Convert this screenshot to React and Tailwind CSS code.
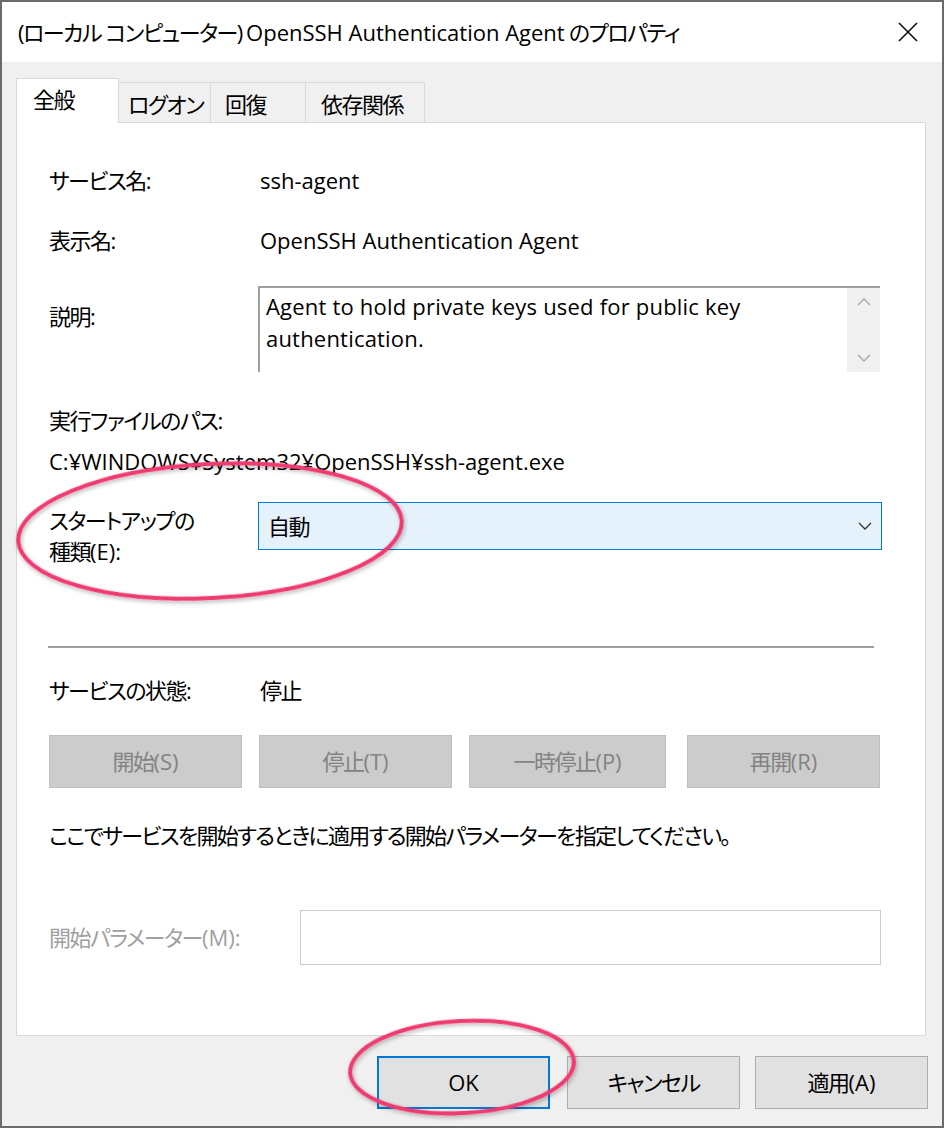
import React from 'react';

const font = { fontFamily: '"Open Sans", "Noto Sans CJK JP", sans-serif' };

const Chevron = ({ up, className }) => (
  <svg width="14" height="8" viewBox="0 0 14 8" className={className}>
    <path d={up ? 'M1 7 L7 1 L13 7' : 'M1 1 L7 7 L13 1'} fill="none" stroke="currentColor" strokeWidth="1.3" />
  </svg>
);

const Tab = ({ label, active, w, pl }) =>
  active ? (
    <div className={`h-[45px] ${w} bg-white border border-b-0 border-[#d9d9d9] pl-[16px] pt-[5px] leading-[30px] whitespace-nowrap relative z-10 -mb-px`}>
      {label}
    </div>
  ) : (
    <div className={`h-[40px] ${w} ${pl} bg-[#f0f0f0] border-t border-r border-[#d9d9d9] pt-[7px] leading-[28px] whitespace-nowrap`}>
      {label}
    </div>
  );

const DisabledButton = ({ label, keyHint, w }) => (
  <div className={`h-[53px] ${w} bg-[#cccccc] border border-[#bfbfbf] flex items-center justify-center text-[#838383]`}>
    {label}
    <span className="tracking-normal">{keyHint}</span>
  </div>
);

const Ellipse = ({ className, rx, ry, rotate }) => (
  <svg className={`absolute pointer-events-none ${className}`} viewBox={`0 0 ${rx * 2 + 20} ${ry * 2 + 20}`}>
    <defs>
      <filter id={`sh${rx}`} x="-10%" y="-10%" width="120%" height="120%">
        <feDropShadow dx="1" dy="2" stdDeviation="2" floodColor="#000" floodOpacity="0.3" />
      </filter>
    </defs>
    <ellipse
      cx={rx + 10}
      cy={ry + 10}
      rx={rx}
      ry={ry}
      fill="none"
      stroke="#ef3a70"
      strokeWidth="4"
      filter={`url(#sh${rx})`}
      transform={`rotate(${rotate} ${rx + 10} ${ry + 10})`}
    />
  </svg>
);

export default function App() {
  return (
    <div
      className="w-[944px] h-[1128px] border-2 border-[#6b6b6b] bg-[#f0f0f0] flex flex-col relative text-black text-[22px] tracking-[-1.5px] [font-feature-settings:'palt']"
      style={font}
    >
      {/* title bar */}
      <div className="h-[60px] bg-white flex items-center justify-between pl-[16px] pr-[24px] shrink-0">
        <span className="whitespace-nowrap">
          (ローカル コンピューター) <span className="tracking-normal">OpenSSH Authentication Agent</span> のプロパティ
        </span>
        <svg width="20" height="20" viewBox="0 0 20 20">
          <path d="M1 1 L19 19 M19 1 L1 19" stroke="#111" strokeWidth="1.6" />
        </svg>
      </div>

      <div className="flex-1 flex flex-col pl-[14px] pr-[16px] pt-[16px]">
        {/* tabs */}
        <div className="flex items-end">
          <Tab label="全般" active w="w-[103px]" />
          <Tab label="ログオン" w="w-[92px]" pl="pl-[9px]" />
          <Tab label="回復" w="w-[95px]" pl="pl-[14px]" />
          <Tab label="依存関係" w="w-[119px]" pl="pl-[15px]" />
        </div>

        {/* panel */}
        <div className="h-[914px] bg-white border border-[#d9d9d9] pl-[32px] pr-[43px] flex flex-col">
          <div className="mt-[42px] flex h-[30px] items-center">
            <span className="w-[211px]">サービス名:</span>
            <span className="tracking-normal">ssh-agent</span>
          </div>
          <div className="mt-[30px] flex h-[30px] items-center">
            <span className="w-[211px]">表示名:</span>
            <span className="tracking-normal">OpenSSH Authentication Agent</span>
          </div>
          <div className="mt-[31px] flex items-start">
            <span className="w-[209px] mt-[15px] leading-[30px]">説明:</span>
            <div className="flex-1 h-[86px] border-t-2 border-l-2 border-[#a0a0a0] flex mr-[2px]">
              <div className="flex-1 pl-[6px] pt-[2px] leading-[32px] tracking-[0.2px]">
                Agent to hold private keys used for public key
                <br />
                authentication.
              </div>
              <div className="w-[33px] bg-[#f0f0f0] flex flex-col items-center justify-between py-[10px] text-[#a6a6a6]">
                <Chevron up />
                <Chevron />
              </div>
            </div>
          </div>
          <div className="mt-[33px] h-[30px] flex items-center">実行ファイルのパス:</div>
          <div className="mt-[11px] h-[30px] flex items-center tracking-normal">C:¥WINDOWS¥System32¥OpenSSH¥ssh-agent.exe</div>
          <div className="mt-[26px] flex items-start">
            <div className="w-[209px] mt-[3px] leading-[31px]">
              スタートアップの
              <br />
              種類<span className="tracking-normal">(E):</span>
            </div>
            <div className="flex-1 h-[48px] bg-[#e5f1fb] border border-[#0078d7] flex items-center justify-between pl-[9px] pr-[9px]">
              <span>自動</span>
              <Chevron className="text-[#333]" />
            </div>
          </div>
          <div className="mt-[79px] h-[2px] bg-[#a0a0a0] mr-[8px] -ml-px" />
          <div className="mt-[27px] flex h-[30px] items-center">
            <span className="w-[211px]">サービスの状態:</span>
            <span>停止</span>
          </div>
          <div className="mt-[30px] flex">
            <DisabledButton label="開始" keyHint="(S)" w="w-[193px]" />
            <div className="w-[17px]" />
            <DisabledButton label="停止" keyHint="(T)" w="w-[193px]" />
            <div className="w-[17px]" />
            <DisabledButton label="一時停止" keyHint="(P)" w="w-[197px]" />
            <div className="w-[21px]" />
            <DisabledButton label="再開" keyHint="(R)" w="w-[193px]" />
          </div>
          <div className="mt-[32px] h-[30px] flex items-center whitespace-nowrap tracking-[-1.7px]">
            ここでサービスを開始するときに適用する開始パラメーターを指定してください。
          </div>
          <div className="mt-[60px] flex items-center">
            <span className="w-[251px] text-[#a0a0a0] whitespace-nowrap">
              開始パラメーター<span className="tracking-normal">(M):</span>
            </span>
            <div className="flex-1 h-[55px] border border-[#cccccc] bg-white mr-[1px]" />
          </div>
        </div>

        {/* dialog buttons */}
        <div className="mt-[20px] flex justify-end -mr-[2px]">
          <div className="w-[173px] h-[53px] bg-[#e1e1e1] border-2 border-[#0078d7] flex items-center justify-center tracking-normal">OK</div>
          <div className="w-[17px]" />
          <div className="w-[173px] h-[53px] bg-[#e1e1e1] border border-[#adadad] flex items-center justify-center">キャンセル</div>
          <div className="w-[15px]" />
          <div className="w-[173px] h-[53px] bg-[#e1e1e1] border border-[#adadad] flex items-center justify-center">
            適用<span className="tracking-normal">(A)</span>
          </div>
        </div>
      </div>

      {/* annotation ellipses */}
      <Ellipse className="left-[6px] top-[452px] w-[404px] h-[154px]" rx={192} ry={67} rotate={-3} />
      <Ellipse className="left-[338px] top-[1009px] w-[244px] h-[112px]" rx={112} ry={46} rotate={-3} />
    </div>
  );
}
